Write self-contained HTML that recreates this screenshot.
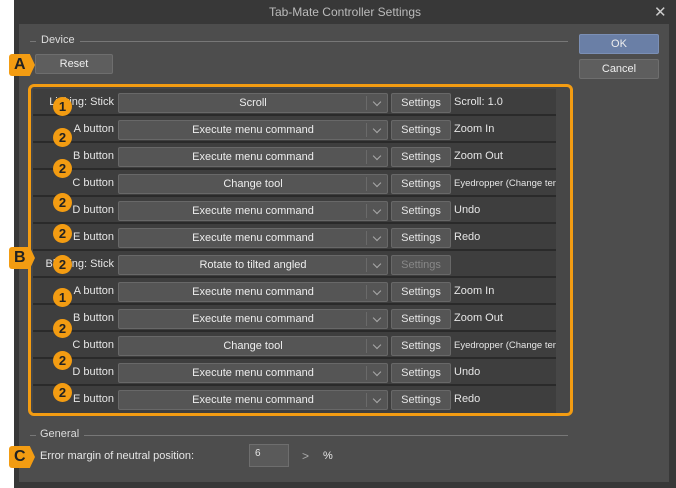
<!DOCTYPE html>
<html><head><meta charset="utf-8"><style>
*{margin:0;padding:0;box-sizing:border-box}
body{width:676px;height:488px;background:#fff;position:relative;overflow:hidden;font-family:"Liberation Sans","Noto Sans CJK JP",sans-serif;font-size:11px;color:#e6e6e6}
.a{position:absolute}
.frame{left:14px;top:0;width:662px;height:488px;background:#383838}
.main{left:19px;top:24px;width:650px;height:458px;background:#4d4d4d}
.btn{position:absolute;background:#5e5e5e;border:1px solid #6e6e6e;border-radius:2px;text-align:center;color:#eee;line-height:18px}
.line{position:absolute;height:1px;background:#777}
.table{left:33px;top:89px;width:523px;height:324px;background:#3e3e3e;overflow:hidden}
.row{position:absolute;left:0;width:523px;height:27px;border-bottom:2px solid #2a2a2a}
.lbl{position:absolute;right:442px;top:7px;white-space:nowrap}
.dd{position:absolute;left:85px;top:4px;width:270px;height:20px;background:#555;border:1px solid #686868;border-radius:2px;text-align:center;line-height:18px;color:#eee}
.dd:after{content:"";position:absolute;right:7px;top:5px;width:5px;height:5px;border-right:1px solid #aaa;border-bottom:1px solid #aaa;transform:rotate(45deg)}
.dd i{position:absolute;right:20px;top:2px;width:1px;height:14px;background:#6a6a6a}
.st{position:absolute;left:358px;top:4px;width:60px;height:20px;background:#555;border:1px solid #686868;border-radius:2px;text-align:center;line-height:18px}
.val{position:absolute;left:421px;top:7px;white-space:nowrap}
.c{position:absolute;width:19px;height:19px;border-radius:50%;background:#f39c12;color:#222;font-weight:bold;font-size:13px;text-align:center;line-height:19px;left:53px}
.tag{position:absolute;left:9px;width:26px;height:22px;background:#f39c12;color:#222;font-weight:bold;font-size:16px;line-height:22px;padding-left:5px;clip-path:polygon(0 0,80% 0,100% 50%,80% 100%,0 100%);border-radius:3px 0 0 3px}
</style></head><body>
<div class="a frame"></div>
<div class="a" style="left:14px;top:5px;width:662px;text-align:center;font-size:12px;color:#bbb">Tab-Mate Controller Settings</div>
<div class="a" style="left:654px;top:3px;font-size:15px;color:#ccc">✕</div>
<div class="a main"></div>
<div class="line" style="left:30px;top:41px;width:6px"></div>
<div class="a" style="left:41px;top:34px;color:#ddd">Device</div>
<div class="line" style="left:80px;top:41px;width:488px"></div>
<div class="btn" style="left:35px;top:54px;width:78px;height:20px">Reset</div>
<div class="btn" style="left:579px;top:34px;width:80px;height:20px;background:#6a7fa6;border-color:#7b8fb5">OK</div>
<div class="btn" style="left:579px;top:59px;width:80px;height:20px">Cancel</div>
<div class="a" style="left:28px;top:84px;width:545px;height:332px;border:3px solid #f39c12;border-radius:6px;background:#474747"></div>
<div class="a table">
<div class="row" style="top:0"><span class="lbl">Linking: Stick</span><div class="dd">Scroll<i></i></div><div class="st">Settings</div><span class="val">Scroll: 1.0</span></div>
<div class="row" style="top:27px"><span class="lbl">A button</span><div class="dd">Execute menu command<i></i></div><div class="st">Settings</div><span class="val">Zoom In</span></div>
<div class="row" style="top:54px"><span class="lbl">B button</span><div class="dd">Execute menu command<i></i></div><div class="st">Settings</div><span class="val">Zoom Out</span></div>
<div class="row" style="top:81px"><span class="lbl">C button</span><div class="dd">Change tool<i></i></div><div class="st">Settings</div><span class="val" style="font-size:9.5px;top:8px">Eyedropper (Change temp</span></div>
<div class="row" style="top:108px"><span class="lbl">D button</span><div class="dd">Execute menu command<i></i></div><div class="st">Settings</div><span class="val">Undo</span></div>
<div class="row" style="top:135px"><span class="lbl">E button</span><div class="dd">Execute menu command<i></i></div><div class="st">Settings</div><span class="val">Redo</span></div>
<div class="row" style="top:162px"><span class="lbl">Blinking: Stick</span><div class="dd">Rotate to tilted angled<i></i></div><div class="st" style="color:#888">Settings</div></div>
<div class="row" style="top:189px"><span class="lbl">A button</span><div class="dd">Execute menu command<i></i></div><div class="st">Settings</div><span class="val">Zoom In</span></div>
<div class="row" style="top:216px"><span class="lbl">B button</span><div class="dd">Execute menu command<i></i></div><div class="st">Settings</div><span class="val">Zoom Out</span></div>
<div class="row" style="top:243px"><span class="lbl">C button</span><div class="dd">Change tool<i></i></div><div class="st">Settings</div><span class="val" style="font-size:9.5px;top:8px">Eyedropper (Change temp</span></div>
<div class="row" style="top:270px"><span class="lbl">D button</span><div class="dd">Execute menu command<i></i></div><div class="st">Settings</div><span class="val">Undo</span></div>
<div class="row" style="top:297px;border:0"><span class="lbl">E button</span><div class="dd">Execute menu command<i></i></div><div class="st">Settings</div><span class="val">Redo</span></div>
</div>
<div class="c" style="top:97px">1</div>
<div class="c" style="top:128px">2</div>
<div class="c" style="top:159px">2</div>
<div class="c" style="top:193px">2</div>
<div class="c" style="top:224px">2</div>
<div class="c" style="top:255px">2</div>
<div class="c" style="top:288px">1</div>
<div class="c" style="top:319px">2</div>
<div class="c" style="top:351px">2</div>
<div class="c" style="top:383px">2</div>
<div class="line" style="left:30px;top:435px;width:6px"></div>
<div class="a" style="left:40px;top:428px;color:#ddd">General</div>
<div class="line" style="left:84px;top:435px;width:484px"></div>
<div class="a" style="left:40px;top:450px">Error margin of neutral position:</div>
<div class="a" style="left:249px;top:444px;width:40px;height:23px;background:#5a5a5a;border:1px solid #6e6e6e;padding:3px 5px;font-size:10px">6</div>
<div class="a" style="left:302px;top:449px;color:#aaa;font-size:12px">&gt;</div>
<div class="a" style="left:323px;top:450px">%</div>
<div class="tag" style="top:54px">A</div>
<div class="tag" style="top:247px">B</div>
<div class="tag" style="top:446px">C</div>
</body></html>
